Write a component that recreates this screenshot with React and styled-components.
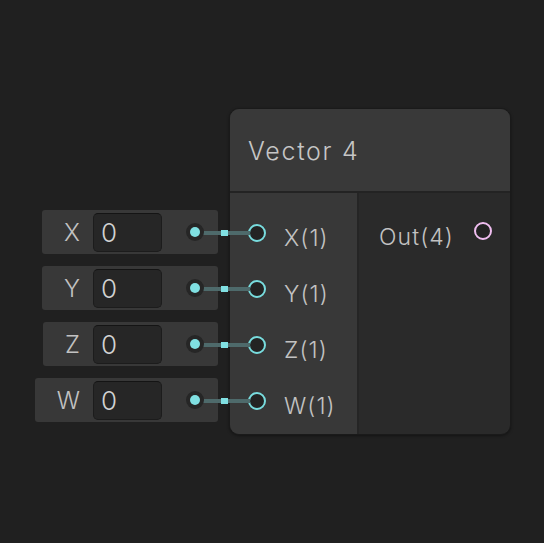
import React from 'react';
import styled, { createGlobalStyle } from 'styled-components';

const Global = createGlobalStyle`
  html, body { margin: 0; padding: 0; background: #202020; }
  body { font-family: Inter, "Noto Sans", sans-serif; }
`;

const Canvas = styled.div`
  width: 544px;
  height: 543px;
  background: #202020;
  display: flex;
  align-items: flex-start;
  padding: 108px 0 0 35px;
  box-sizing: border-box;
  gap: 11px;
`;

const Inputs = styled.div`
  display: flex;
  flex-direction: column;
  align-items: flex-end;
  gap: 12px;
  margin-top: 102px;
  width: 183px;
`;

const InputRow = styled.div`
  position: relative;
  height: 44px;
  display: flex;
  align-items: center;
  background: #383838;
  border-radius: 3px;
`;

const InputLabel = styled.span`
  padding: 0 13px 0 22px;
  color: #c2c2c2;
  font-size: 24px;
  font-weight: 300;
`;

const Field = styled.div`
  width: 69px;
  height: 39px;
  box-sizing: border-box;
  background: #262626;
  border: 1px solid #1c1c1c;
  border-top-color: #141414;
  border-radius: 5px;
  color: #d2d2d2;
  font-size: 26px;
  font-weight: 300;
  display: flex;
  align-items: center;
  padding-left: 7px;
`;

const Trail = styled.div`
  width: 56px;
  height: 100%;
  display: flex;
  align-items: center;
  padding-left: 24px;
  box-sizing: border-box;
`;

const Dot = styled.div`
  position: relative;
  z-index: 2;
  width: 18px;
  height: 18px;
  border-radius: 50%;
  background: #262626;
  display: flex;
  align-items: center;
  justify-content: center;
  &::after {
    content: '';
    width: 10px;
    height: 10px;
    border-radius: 50%;
    background: #80e0e2;
  }
`;

/* connection from the input dot to the node port, crossing the gap */
const Wire = styled.div`
  position: absolute;
  right: -32px;
  top: 21px;
  width: 47px;
  height: 4px;
  background: #4e6a6b;
  z-index: 1;
  &::after {
    content: '';
    position: absolute;
    left: 18px;
    top: -1px;
    width: 7px;
    height: 6px;
    background: #80e0e2;
  }
`;

const Node = styled.div`
  width: 282px;
  height: 327px;
  box-sizing: border-box;
  border: 1px solid #1a1a1a;
  border-radius: 10px;
  overflow: hidden;
  display: flex;
  flex-direction: column;
  background: #2a2a2a;
  box-shadow: 0 1px 3px rgba(0, 0, 0, 0.4);
`;

const Header = styled.div`
  height: 84px;
  flex: none;
  box-sizing: border-box;
  background: #393939;
  border-bottom: 2px solid #232323;
  display: flex;
  align-items: center;
  padding: 2px 0 0 18px;
  color: #c6c6c6;
  font-size: 25px;
  font-weight: 300;
  letter-spacing: 1.7px;
`;

const Body = styled.div`
  flex: 1;
  display: flex;
`;

const PortsIn = styled.div`
  width: 127px;
  background: #383838;
  border-right: 2px solid #252525;
  padding-top: 12px;
  display: flex;
  flex-direction: column;
`;

const PortsOut = styled.div`
  flex: 1;
  padding: 29px 18px 0 20px;
  display: flex;
  justify-content: space-between;
  align-items: flex-start;
`;

const PortRow = styled.div`
  height: 56px;
  display: flex;
  align-items: center;
  padding-left: 18px;
  gap: 18px;
`;

const Port = styled.div`
  width: 18px;
  height: 18px;
  flex: none;
  box-sizing: border-box;
  border-radius: 50%;
  border: 2px solid ${p => p.$color};
  background: #232323;
`;

const PortLabel = styled.span`
  color: #c2c2c2;
  font-size: 23px;
  font-weight: 300;
  letter-spacing: 1.1px;
  padding-top: 9px;
`;

const OutLabel = styled.span`
  color: #c2c2c2;
  font-size: 23px;
  font-weight: 300;
  letter-spacing: 1.1px;
  margin-top: 1px;
`;

const axes = ['X', 'Y', 'Z', 'W'];

export default function App() {
  return (
    <>
      <Global />
      <Canvas>
        <Inputs>
          {axes.map(a => (
            <InputRow key={a}>
              <InputLabel>{a}</InputLabel>
              <Field>0</Field>
              <Trail>
                <Dot />
              </Trail>
              <Wire />
            </InputRow>
          ))}
        </Inputs>
        <Node>
          <Header>Vector 4</Header>
          <Body>
            <PortsIn>
              {axes.map(a => (
                <PortRow key={a}>
                  <Port $color="#78dcde" />
                  <PortLabel>{a}(1)</PortLabel>
                </PortRow>
              ))}
            </PortsIn>
            <PortsOut>
              <OutLabel>Out(4)</OutLabel>
              <Port $color="#efbdef" />
            </PortsOut>
          </Body>
        </Node>
      </Canvas>
    </>
  );
}
